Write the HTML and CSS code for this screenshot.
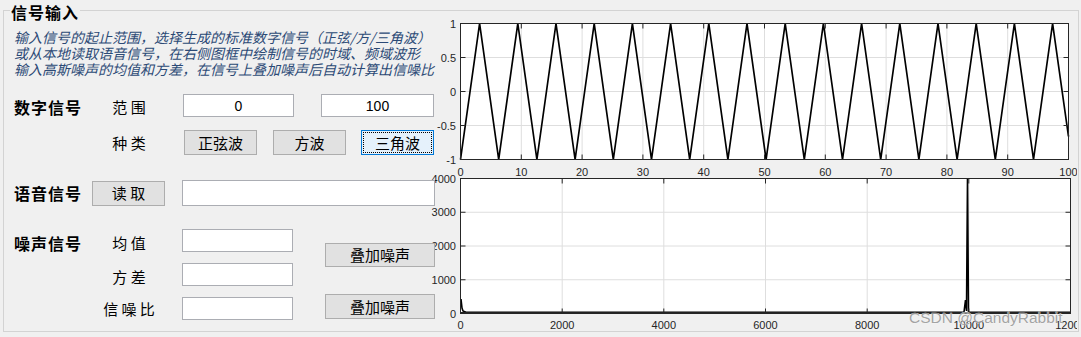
FILE: index.html
```html
<!DOCTYPE html>
<html lang="zh">
<head>
<meta charset="utf-8">
<title>信号输入</title>
<link rel="stylesheet" href="styles.css">
</head>
<body>
<div class="group">
  <span class="group-title">信号输入</span>
  <div class="left">
    <p class="intro">输入信号的起止范围，选择生成的标准数字信号（正弦/方/三角波）<br>或从本地读取语音信号，在右侧图框中绘制信号的时域、频域波形<br>输入高斯噪声的均值和方差，在信号上叠加噪声后自动计算出信噪比</p>
    <div class="row row-digital">
      <span class="label">数字信号</span>
      <span class="sublabel">范 围</span>
      <div class="field f-from">0</div>
      <div class="field f-to">100</div>
    </div>
    <div class="row row-kind">
      <span class="label"></span>
      <span class="sublabel">种 类</span>
      <div class="btn b-sine">正弦波</div>
      <div class="btn b-square">方波</div>
      <div class="btn b-tri focused">三角波</div>
    </div>
    <div class="row row-voice">
      <span class="label label-voice">语音信号</span>
      <div class="btn b-read">读 取</div>
      <div class="field f-path"></div>
    </div>
    <div class="noise">
      <span class="label n-label">噪声信号</span>
      <span class="sublabel n-sub1">均 值</span>
      <div class="field n-field n-f1"></div>
      <div class="btn n-btn1">叠加噪声</div>
      <span class="sublabel n-sub2">方 差</span>
      <div class="field n-field n-f2"></div>
      <span class="sublabel n-sub3">信 噪 比</span>
      <div class="field n-field n-f3"></div>
      <div class="btn n-btn2">叠加噪声</div>
    </div>
  </div>
  <svg class="plots" width="642" height="320" viewBox="435 11 642 320" xmlns="http://www.w3.org/2000/svg">
    <defs>
      <clipPath id="panelclip" clipPathUnits="userSpaceOnUse">
        <rect x="380" y="11" width="697" height="320"/>
      </clipPath>
    </defs>
    <g clip-path="url(#panelclip)">
    <!-- top plot -->
    <rect x="460.5" y="23.5" width="608" height="136" fill="#ffffff"/>
    <g stroke="#dedede" stroke-width="1">
      <line x1="521.3" y1="23.5" x2="521.3" y2="159.5"/>
      <line x1="582.1" y1="23.5" x2="582.1" y2="159.5"/>
      <line x1="642.9" y1="23.5" x2="642.9" y2="159.5"/>
      <line x1="703.7" y1="23.5" x2="703.7" y2="159.5"/>
      <line x1="764.5" y1="23.5" x2="764.5" y2="159.5"/>
      <line x1="825.3" y1="23.5" x2="825.3" y2="159.5"/>
      <line x1="886.1" y1="23.5" x2="886.1" y2="159.5"/>
      <line x1="946.9" y1="23.5" x2="946.9" y2="159.5"/>
      <line x1="1007.7" y1="23.5" x2="1007.7" y2="159.5"/>
      <line x1="460.5" y1="57.5" x2="1068.5" y2="57.5"/>
      <line x1="460.5" y1="91.5" x2="1068.5" y2="91.5"/>
      <line x1="460.5" y1="125.5" x2="1068.5" y2="125.5"/>
    </g>
    <polyline fill="none" stroke="#000000" stroke-width="1.7" points="460.5,159.5 479.6,23.5 498.7,159.5 517.8,23.5 536.9,159.5 556.0,23.5 575.1,159.5 594.2,23.5 613.3,159.5 632.4,23.5 651.5,159.5 670.6,23.5 689.7,159.5 708.8,23.5 727.9,159.5 747.0,23.5 766.1,159.5 785.2,23.5 804.3,159.5 823.4,23.5 842.5,159.5 861.6,23.5 880.7,159.5 899.8,23.5 918.9,159.5 938.0,23.5 957.1,159.5 976.2,23.5 995.3,159.5 1014.4,23.5 1033.5,159.5 1052.6,23.5 1068.5,136.5"/>
    <g stroke="#262626" stroke-width="1">
      <rect x="460.5" y="23.5" width="608" height="136" fill="none"/>
      <path d="M521.3 159.5v-5M582.1 159.5v-5M642.9 159.5v-5M703.7 159.5v-5M764.5 159.5v-5M825.3 159.5v-5M886.1 159.5v-5M946.9 159.5v-5M1007.7 159.5v-5
               M521.3 23.5v5M582.1 23.5v5M642.9 23.5v5M703.7 23.5v5M764.5 23.5v5M825.3 23.5v5M886.1 23.5v5M946.9 23.5v5M1007.7 23.5v5
               M460.5 57.5h5M460.5 91.5h5M460.5 125.5h5M1068.5 57.5h-5M1068.5 91.5h-5M1068.5 125.5h-5"/>
    </g>
    <g class="ticklabel" text-anchor="end">
      <text x="456" y="27.5">1</text>
      <text x="456" y="61.5">0.5</text>
      <text x="456" y="95.5">0</text>
      <text x="456" y="129.5">-0.5</text>
      <text x="456" y="163.5">-1</text>
    </g>
    <g class="ticklabel" text-anchor="middle">
      <text x="460.5" y="175.5">0</text>
      <text x="521.3" y="175.5">10</text>
      <text x="582.1" y="175.5">20</text>
      <text x="642.9" y="175.5">30</text>
      <text x="703.7" y="175.5">40</text>
      <text x="764.5" y="175.5">50</text>
      <text x="825.3" y="175.5">60</text>
      <text x="886.1" y="175.5">70</text>
      <text x="946.9" y="175.5">80</text>
      <text x="1007.7" y="175.5">90</text>
      <text x="1068.5" y="175.5">100</text>
    </g>

    <!-- bottom plot -->
    <rect x="460.5" y="178.5" width="610" height="135" fill="#ffffff"/>
    <g stroke="#dedede" stroke-width="1">
      <line x1="562.2" y1="178.5" x2="562.2" y2="313.5"/>
      <line x1="663.8" y1="178.5" x2="663.8" y2="313.5"/>
      <line x1="765.5" y1="178.5" x2="765.5" y2="313.5"/>
      <line x1="867.2" y1="178.5" x2="867.2" y2="313.5"/>
      <line x1="968.8" y1="178.5" x2="968.8" y2="313.5"/>
      <line x1="460.5" y1="212.25" x2="1070.5" y2="212.25"/>
      <line x1="460.5" y1="246" x2="1070.5" y2="246"/>
      <line x1="460.5" y1="279.75" x2="1070.5" y2="279.75"/>
    </g>
    <polyline fill="none" stroke="#000000" stroke-width="1.6" points="461,299 462,308 463,311 466,312.2 964,312.2 965.5,300 966.5,311 967.5,178.5 968.5,312.2 1070,312.2"/>
    <line x1="461" y1="312.6" x2="1070" y2="312.6" stroke="#222222" stroke-width="1.4"/>
    <g stroke="#262626" stroke-width="1">
      <rect x="460.5" y="178.5" width="610" height="135" fill="none"/>
      <path d="M562.2 313.5v-5M663.8 313.5v-5M765.5 313.5v-5M867.2 313.5v-5M968.8 313.5v-5
               M562.2 178.5v5M663.8 178.5v5M765.5 178.5v5M867.2 178.5v5M968.8 178.5v5
               M460.5 212.25h5M460.5 246h5M460.5 279.75h5M1070.5 212.25h-5M1070.5 246h-5M1070.5 279.75h-5"/>
    </g>
    <g class="ticklabel" text-anchor="end">
      <text x="456" y="182.5">4000</text>
      <text x="456" y="216.25">3000</text>
      <text x="456" y="250">2000</text>
      <text x="456" y="283.75">1000</text>
      <text x="456" y="318">0</text>
    </g>
    <g class="ticklabel" text-anchor="middle">
      <text x="460.5" y="329">0</text>
      <text x="562.2" y="329">2000</text>
      <text x="663.8" y="329">4000</text>
      <text x="765.5" y="329">6000</text>
      <text x="867.2" y="329">8000</text>
      <text x="968.8" y="329">10000</text>
      <text x="1070.5" y="329">12000</text>
    </g>
    <text class="watermark" x="909" y="323">CSDN @CandyRabbit</text>
    </g>
  </svg>
</div>
<div class="next-titles">
  <span class="next-title">信号处理</span>
  <span class="next-title second">信号分析</span>
</div>
</body>
</html>
```

FILE: styles.css
```css
html, body {
  margin: 0;
  padding: 0;
}
body {
  width: 1081px;
  height: 337px;
  overflow: hidden;
  background: #f0f0f0;
  font-family: "Noto Sans CJK SC", "Liberation Sans", sans-serif;
  color: #000;
}
.group {
  position: relative;
  box-sizing: border-box;
  margin: 10px 0 0 3px;
  width: 1076px;
  height: 322px;
  border: 1px solid #d3d3d3;
  display: flex;
}
.group-title {
  position: absolute;
  left: 6px;
  top: -9px;
  padding: 0 1px;
  background: #f0f0f0;
  font-size: 16px;
  line-height: 20px;
  font-weight: bold;
  letter-spacing: 1px;
  z-index: 2;
}
.left {
  position: relative;
  z-index: 1;
  box-sizing: border-box;
  width: 431px;
  height: 320px;
  flex: none;
  padding-left: 10px;
}
.intro {
  margin: 0;
  padding-top: 18px;
  font-size: 14px;
  line-height: 16px;
  font-style: italic;
  color: #2c4a76;
  white-space: nowrap;
}
.row {
  display: flex;
  align-items: center;
}
.row-digital { margin-top: 17px; height: 23px; }
.row-kind { margin-top: 13px; height: 25px; }
.row-voice { margin-top: 25px; height: 26px; }

.label {
  flex: none;
  width: 86px;
  font-size: 16px;
  font-weight: bold;
  letter-spacing: 1px;
  line-height: 20px;
}
.row-digital .label { padding-top: 3px; }
.label-voice { width: 78px; }
.sublabel {
  flex: none;
  width: 58px;
  text-align: center;
  font-size: 15px;
  line-height: 20px;
  white-space: nowrap;
}
.row-digital .sublabel { padding-top: 3px; }

.field {
  box-sizing: border-box;
  flex: none;
  background: #ffffff;
  border: 1px solid #abadb3;
  display: flex;
  align-items: center;
  justify-content: center;
  font-family: "Liberation Sans", sans-serif;
  font-size: 14px;
}
.f-from { width: 111px; height: 23px; margin-left: 25px; }
.f-to { width: 113px; height: 23px; margin-left: 27px; }
.f-path { width: 253px; height: 26px; margin-left: 17px; }

.btn {
  box-sizing: border-box;
  flex: none;
  background: #e1e1e1;
  border: 1px solid #adadad;
  display: flex;
  align-items: center;
  justify-content: center;
  font-size: 15px;
  line-height: 18px;
  white-space: nowrap;
}
.b-sine { width: 73px; height: 25px; margin-left: 26px; }
.b-square { width: 73px; height: 25px; margin-left: 16px; }
.b-tri { width: 73px; height: 25px; margin-left: 15px; }
.b-read { width: 73px; height: 25px; }
.focused {
  background: #e5f1fb;
  border-color: #0078d7;
  outline: 1px dotted #000;
  outline-offset: -3px;
}

.noise {
  margin-top: 23px;
  display: grid;
  grid-template-columns: 86px 82px 143px 110px;
  grid-template-rows: 23px 23px 23px;
  row-gap: 11px;
}
.n-label { grid-column: 1; grid-row: 1; align-self: center; padding-top: 4px; }
.n-sub1 { grid-column: 2; grid-row: 1; align-self: center; padding-top: 4px; }
.n-sub2 { grid-column: 2; grid-row: 2; align-self: center; padding-top: 5px; }
.n-sub3 { grid-column: 2; grid-row: 3; align-self: center; }
.n-field { width: 111px; height: 23px; grid-column: 3; }
.n-f1 { grid-row: 1; }
.n-f2 { grid-row: 2; }
.n-f3 { grid-row: 3; }
.n-btn1 {
  grid-column: 4;
  grid-row: 1 / 3;
  align-self: start;
  margin-top: 14px;
  width: 110px;
  height: 24px;
}
.n-btn2 {
  grid-column: 4;
  grid-row: 3;
  align-self: start;
  margin-top: -3px;
  width: 110px;
  height: 25px;
}

.plots {
  display: block;
  flex: none;
  overflow: visible;
}
.ticklabel text {
  font-family: "Liberation Sans", sans-serif;
  font-size: 11px;
  fill: #262626;
}
.watermark {
  font-family: "Liberation Sans", sans-serif;
  font-size: 15.5px;
  fill: #9c9c9c;
  stroke: #ffffff;
  stroke-width: 0.6px;
  paint-order: stroke;
  opacity: 0.9;
}

.next-titles {
  display: flex;
  margin-top: 2px;
  padding-left: 12px;
}
.next-title {
  font-size: 16px;
  font-weight: bold;
  line-height: 20px;
  letter-spacing: 1px;
}
.next-title.second {
  margin-left: 464px;
}
```
